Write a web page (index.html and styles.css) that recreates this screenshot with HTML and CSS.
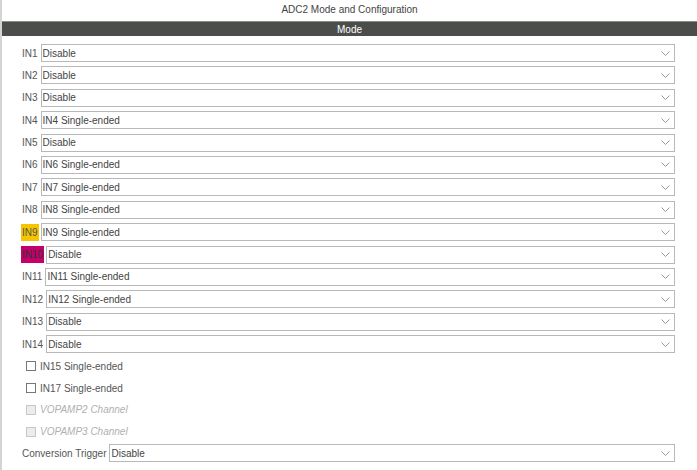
FILE: index.html
```html
<!DOCTYPE html>
<html lang="en">
<head>
<meta charset="UTF-8">
<meta name="viewport" content="width=device-width, initial-scale=1.0">
<title>ADC2 Mode and Configuration</title>
<link rel="stylesheet" href="styles.css">
</head>
<body>

<div id="panel">
  <div class="title">ADC2 Mode and Configuration</div>
  <div class="bar">Mode</div>

  <div id="modes">
    <!-- channel selects -->
    <div class="row"><span class="label">IN1</span><div class="select">Disable<svg class="chev" viewBox="0 0 9 5"><path d="M0.5 0.5 L4.5 4.5 L8.5 0.5"/></svg></div></div>
    <div class="row"><span class="label">IN2</span><div class="select">Disable<svg class="chev" viewBox="0 0 9 5"><path d="M0.5 0.5 L4.5 4.5 L8.5 0.5"/></svg></div></div>
    <div class="row"><span class="label">IN3</span><div class="select">Disable<svg class="chev" viewBox="0 0 9 5"><path d="M0.5 0.5 L4.5 4.5 L8.5 0.5"/></svg></div></div>
    <div class="row"><span class="label">IN4</span><div class="select">IN4 Single-ended<svg class="chev" viewBox="0 0 9 5"><path d="M0.5 0.5 L4.5 4.5 L8.5 0.5"/></svg></div></div>
    <div class="row"><span class="label">IN5</span><div class="select">Disable<svg class="chev" viewBox="0 0 9 5"><path d="M0.5 0.5 L4.5 4.5 L8.5 0.5"/></svg></div></div>
    <div class="row"><span class="label">IN6</span><div class="select">IN6 Single-ended<svg class="chev" viewBox="0 0 9 5"><path d="M0.5 0.5 L4.5 4.5 L8.5 0.5"/></svg></div></div>
    <div class="row"><span class="label">IN7</span><div class="select">IN7 Single-ended<svg class="chev" viewBox="0 0 9 5"><path d="M0.5 0.5 L4.5 4.5 L8.5 0.5"/></svg></div></div>
    <div class="row"><span class="label">IN8</span><div class="select">IN8 Single-ended<svg class="chev" viewBox="0 0 9 5"><path d="M0.5 0.5 L4.5 4.5 L8.5 0.5"/></svg></div></div>
    <div class="row"><span class="label warn">IN9</span><div class="select">IN9 Single-ended<svg class="chev" viewBox="0 0 9 5"><path d="M0.5 0.5 L4.5 4.5 L8.5 0.5"/></svg></div></div>
    <div class="row"><span class="label conflict">IN10</span><div class="select">Disable<svg class="chev" viewBox="0 0 9 5"><path d="M0.5 0.5 L4.5 4.5 L8.5 0.5"/></svg></div></div>
    <div class="row"><span class="label">IN11</span><div class="select">IN11 Single-ended<svg class="chev" viewBox="0 0 9 5"><path d="M0.5 0.5 L4.5 4.5 L8.5 0.5"/></svg></div></div>
    <div class="row"><span class="label">IN12</span><div class="select">IN12 Single-ended<svg class="chev" viewBox="0 0 9 5"><path d="M0.5 0.5 L4.5 4.5 L8.5 0.5"/></svg></div></div>
    <div class="row"><span class="label">IN13</span><div class="select">Disable<svg class="chev" viewBox="0 0 9 5"><path d="M0.5 0.5 L4.5 4.5 L8.5 0.5"/></svg></div></div>
    <div class="row"><span class="label">IN14</span><div class="select">Disable<svg class="chev" viewBox="0 0 9 5"><path d="M0.5 0.5 L4.5 4.5 L8.5 0.5"/></svg></div></div>

    <!-- checkboxes -->
    <div class="check"><span class="box"></span>IN15 Single-ended</div>
    <div class="check"><span class="box"></span>IN17 Single-ended</div>
    <div class="check disabled"><span class="box"></span>VOPAMP2 Channel</div>
    <div class="check disabled"><span class="box"></span>VOPAMP3 Channel</div>

    <div class="row trigger"><span class="label">Conversion Trigger</span><div class="select">Disable<svg class="chev" viewBox="0 0 9 5"><path d="M0.5 0.5 L4.5 4.5 L8.5 0.5"/></svg></div></div>
  </div>
</div>

</body>
</html>
```

FILE: styles.css
```css
body {
  margin: 0;
  background: #fff;
  font-family: "Liberation Sans", Arial, sans-serif;
  font-size: 10px;
  color: #555;
}

#panel {
  border-left: 2px solid #d4d4d4;
  height: 470px;
  box-sizing: border-box;
}

.title {
  height: 21px;
  line-height: 20px;
  text-align: center;
  color: #444;
}

.bar {
  height: 15px;
  line-height: 15px;
  background-color: #4b4d4b;
  border-top: 1px solid #8a8c8a;
  box-sizing: border-box;
  color: #fff;
  text-align: center;
}

#modes {
  padding: 8px 22px 0 19px;
}

.row {
  display: flex;
  align-items: center;
  height: 18px;
  margin-bottom: 4.4px;
}

.label {
  padding: 0 1px;
  margin-right: 2px;
  line-height: 17px;
  color: #555;
}

.label.warn { background-color: #f6c500; }
.label.conflict { background-color: #c4006a; color: #333; }

.select {
  flex: 1;
  height: 18px;
  line-height: 17px;
  border: 1px solid #b8b8b8;
  box-sizing: border-box;
  padding-left: 1px;
  color: #444;
  display: flex;
  align-items: center;
  justify-content: space-between;
}

.chev {
  width: 9px;
  height: 5px;
  margin-right: 4px;
  fill: none;
  stroke: #999;
  stroke-width: 1;
}

.check {
  display: flex;
  align-items: center;
  height: 18px;
  margin-bottom: 3.7px;
  padding-left: 5px;
  color: #555;
}

.check:first-of-type { margin-top: 1px; }

.box {
  width: 8px;
  height: 8px;
  border: 1px solid #777;
  margin-right: 4px;
  background: #fff;
}

.check.disabled { color: #b0b0b0; font-style: italic; }
.check.disabled .box { border-color: #c8c8c8; background: #ececec; }

.trigger { margin-top: 0; }
```
